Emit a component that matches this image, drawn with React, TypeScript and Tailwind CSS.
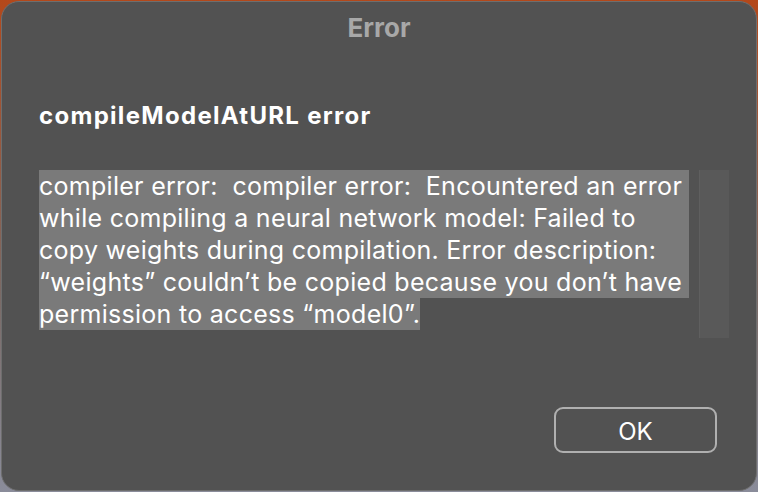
import React from "react";

export default function App() {
  const lines = [
    "compiler error:\u00a0 compiler error:\u00a0 Encountered an error",
    "while compiling a neural network model: Failed to",
    "copy weights during compilation. Error description:",
    "\u201cweights\u201d couldn\u2019t be copied because you don\u2019t have",
  ];
  return (
    <div className="w-[758px] h-[492px] overflow-hidden bg-[linear-gradient(to_bottom,#b4481a,#7a6a66_60%,#8a8c9a)]" style={{ fontFamily: "Inter, 'Noto Sans', sans-serif" }}>
      <div className="m-[1px] h-[490px] w-[756px] rounded-[18px] border border-[#6e6e6e] bg-[#525252] flex flex-col">
        <div className="pt-[10px] h-[50px] text-center text-[26px] font-bold text-[#a8a8a8] leading-[32px]">Error</div>
        <div className="mt-[49px] pl-[37px] text-[24px] font-bold text-white leading-[30px] tracking-[1.3px]">compileModelAtURL error</div>
        <div className="mt-[39px] pl-[37px] flex gap-[10px]">
          <div className="w-[650px] text-[25px] leading-[32px] text-white tracking-[0.28px]">
            {lines.map((l) => (
              <div key={l} className="bg-[#7a7a7a] whitespace-nowrap">{l}</div>
            ))}
            <div>
              <span className="bg-[#7a7a7a] whitespace-nowrap inline-block">permission to access {"\u201cmodel0\u201d."}</span>
            </div>
          </div>
          <div className="w-[30px] h-[168px] bg-[#595959] border-l border-[#5f5f5f]"></div>
        </div>
        <div className="mt-[69px] flex justify-end pr-[39px]">
          <div className="w-[163px] h-[46px] rounded-[9px] border-2 border-[#b0b0b0] flex items-center justify-center pt-[3px] text-[24px] text-white">OK</div>
        </div>
      </div>
    </div>
  );
}
